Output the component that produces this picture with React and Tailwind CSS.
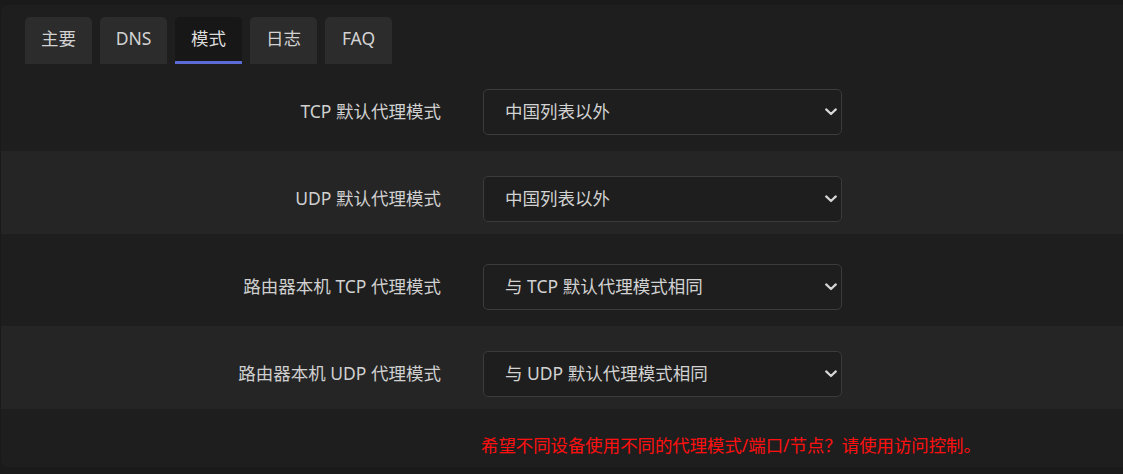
import React from "react";

const tabs = ["主要", "DNS", "模式", "日志", "FAQ"];

const rows = [
  { label: "TCP 默认代理模式", value: "中国列表以外", cls: "h-[87px] pt-[25px] bg-[#1e1e1e]" },
  { label: "UDP 默认代理模式", value: "中国列表以外", cls: "h-[83px] pt-[25px] bg-[#252525]" },
  { label: "路由器本机 TCP 代理模式", value: "与 TCP 默认代理模式相同", cls: "h-[92px] pt-[30px] bg-[#1e1e1e]" },
  { label: "路由器本机 UDP 代理模式", value: "与 UDP 默认代理模式相同", cls: "h-[83px] pt-[25px] bg-[#252525]" },
];

function Chevron() {
  return (
    <svg width="12" height="8" viewBox="0 0 12 8" className="pointer-events-none absolute right-[5px] top-1/2 -translate-y-1/2">
      <path d="M1.2 1.4 L6 6 L10.8 1.4" fill="none" stroke="#d6d6d6" strokeWidth="2.2" strokeLinecap="round" strokeLinejoin="round" />
    </svg>
  );
}

export default function App() {
  return (
    <div
      className="w-[1123px] h-[474px] bg-[#1a1a1a] overflow-hidden pt-[5px] pl-[1px]"
      style={{ fontFamily: '"Noto Sans", "Noto Sans CJK SC", sans-serif' }}
    >
      <div className="h-[462px] bg-[#1e1e1e] rounded-l-[6px] overflow-hidden flex flex-col">
        <div className="h-[59px] flex items-end gap-[8px] pl-[24px] shrink-0">
          {tabs.map((t) => {
            const active = t === "模式";
            return (
              <div
                key={t}
                className={
                  active
                    ? "w-[67px] h-[47px] rounded-t-[5px] bg-[#171717] border-b-[3px] border-[#5b6bd6] flex items-center justify-center text-[17.5px] leading-none text-[#dcdcdc]"
                    : "w-[67px] h-[47px] rounded-t-[5px] bg-[#2c2c2c] pb-[3px] flex items-center justify-center text-[17.5px] leading-none text-[#d2d2d2]"
                }
              >
                {t}
              </div>
            );
          })}
        </div>
        {rows.map((r) => (
          <div key={r.label} className={`${r.cls} flex items-start shrink-0`}>
            <div className="w-[440px] h-[46px] flex items-center justify-end text-[17.5px] leading-none text-[#d0d0d0] whitespace-nowrap">
              {r.label}
            </div>
            <div className="relative ml-[42px] w-[359px] h-[46px]">
              <select
                defaultValue={r.value}
                className="appearance-none w-full h-full bg-[#1e1e1e] border border-[#3b3b3b] rounded-[5px] pl-[21px] pr-[30px] text-[17.5px] leading-none text-[#d2d2d2] outline-none"
                style={{ fontFamily: '"Noto Sans", "Noto Sans CJK SC", sans-serif' }}
              >
                <option>{r.value}</option>
              </select>
              <Chevron />
            </div>
          </div>
        ))}
        <div className="h-[58px] pl-[480px] pt-[25px] text-[17.4px] leading-[22px] text-[#ff1010] whitespace-nowrap bg-[#1e1e1e]">
          希望不同设备使用不同的代理模式/端口/节点？请使用访问控制。
        </div>
      </div>
    </div>
  );
}
